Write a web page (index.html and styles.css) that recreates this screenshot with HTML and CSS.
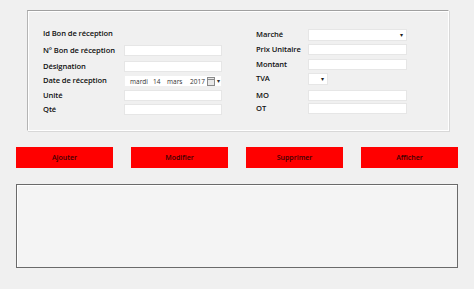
FILE: index.html
```html
<!DOCTYPE html>
<html>
  <head>
    <meta charset="utf-8">
    <title>Bon de réception</title>
    <link rel="stylesheet" href="styles.css">
  </head>
  <body>
    <div class="form">
      <div class="groupbox">
        <div class="col col-left">
          <span class="lbl">Id Bon de réception</span><span></span>
          <span class="lbl">N° Bon de réception</span><span class="field"></span>
          <span class="lbl">Désignation</span><span class="field"></span>
          <span class="lbl">Date de réception</span>
          <span class="field date">
            <span class="d-day">mardi</span><span class="d-num">14</span><span class="d-mon">mars</span><span class="d-year">2017</span>
            <svg class="cal" width="9" height="9" viewBox="0 0 9 9"><rect x="0.5" y="0.5" width="7" height="8" fill="#e8e8e8" stroke="#8a8a8a"/><line x1="1" y1="2.5" x2="7.5" y2="2.5" stroke="#8a8a8a"/></svg>
            <span class="arrow">&#9662;</span>
          </span>
          <span class="lbl">Unité</span><span class="field"></span>
          <span class="lbl">Qté</span><span class="field"></span>
        </div>
        <div class="col col-right">
          <span class="lbl">Marché</span><span class="field combo"><span class="arrow">&#9662;</span></span>
          <span class="lbl">Prix Unitaire</span><span class="field"></span>
          <span class="lbl">Montant</span><span class="field"></span>
          <span class="lbl">TVA</span><span class="field combo small"><span class="arrow">&#9662;</span></span>
          <span class="lbl">MO</span><span class="field"></span>
          <span class="lbl">OT</span><span class="field"></span>
        </div>
      </div>
      <div class="buttons">
        <button class="btn">Ajouter</button>
        <button class="btn">Modifier</button>
        <button class="btn">Supprimer</button>
        <button class="btn">Afficher</button>
      </div>
      <div class="listbox"></div>
    </div>
  </body>
</html>
```

FILE: styles.css
```css
body{margin:0; background:#f0f0f0; font-family:"Open Sans", "Liberation Sans", sans-serif; width:474px; height:289px; overflow:hidden;}

.form{padding-top:10px; padding-left:16px;}

.groupbox{margin-left:11px; border-top:1px solid #a0a0a0; border-left:1px solid #b4b4b4; border-right:1px solid #fff; border-bottom:1px solid #fff; box-shadow:inset 1px 1px 0 #fff, 1px 1px 0 #d8d8d8; display:flex; padding-top:17px; padding-left:15px; box-sizing:border-box; height:121px; width:422px;}

.col{display:grid; align-items:start;}

.col-left{grid-template-columns:81px 98px; grid-template-rows:17px 16px 14px 15px 14px 11px;}

.col-right{margin-left:34px; margin-top:1px; grid-template-columns:52px 99px; grid-template-rows:15px 15px 14px 17px 13px 11px;}

.lbl{font-size:7.6px; font-weight:600; color:#111; line-height:11px; white-space:nowrap; letter-spacing:-0.1px;}

.field{display:block; height:11px; background:#fff; border:1px solid #e6e6e6; box-sizing:border-box;}

.date{height:12px; display:flex; align-items:center; font-size:6.5px; color:#333; border-color:#f0f0f0;}
.date span, .date svg{flex-shrink:0;}
.d-day{margin-left:5px; width:23px;}
.d-num{width:14px;}
.d-mon{width:23px;}
.d-year{width:14px;}
.cal{margin-left:3px;}
.date .arrow{font-size:6px; margin-left:1px; color:#333;}

.combo{display:flex; justify-content:flex-end; align-items:center; padding-right:3px; height:12px;}
.combo .arrow{font-size:6px; color:#222;}
.combo.small{width:20px;}

.buttons{display:flex; gap:18px; margin-top:16px;}

.btn{width:97px; height:21px; background:#ff0000; border:none; margin:0; padding:0; font-family:"Open Sans", "Liberation Sans", sans-serif; font-size:7px; font-weight:600; color:#3a0000;}

.listbox{margin-top:16px; width:442px; height:84px; border:1px solid #6a6a6a; box-sizing:border-box; background:#f4f4f4; box-shadow:inset 1px 1px 0 #fff;}
```
